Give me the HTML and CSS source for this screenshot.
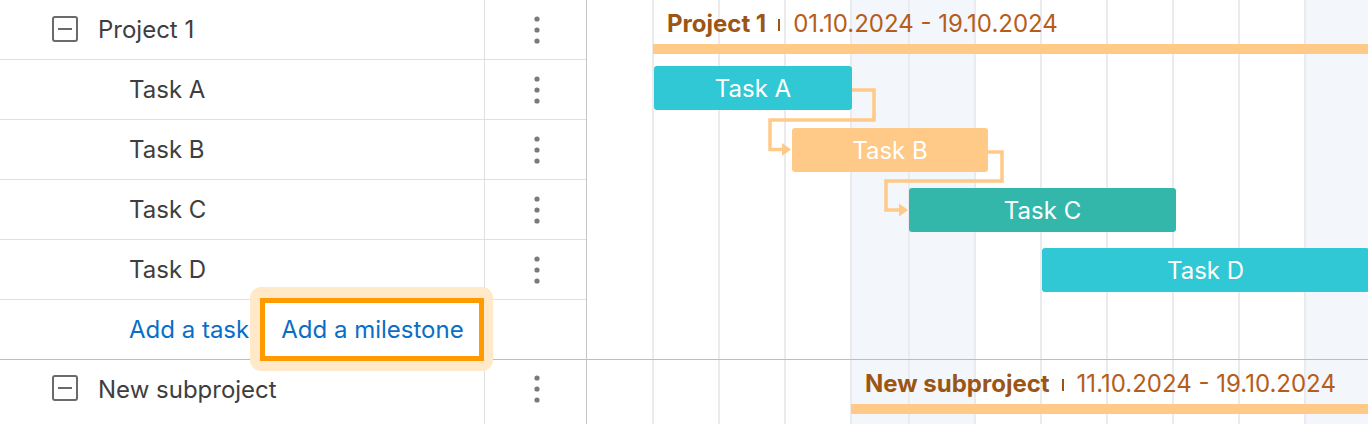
FILE: index.html
```html
<!DOCTYPE html>
<html>
<head>
<meta charset="utf-8">
<link rel="stylesheet" href="styles.css">
</head>
<body>
<div class="gantt">
  <div class="grid">
    <div class="row">
      <div class="name project"><span class="toggle"></span><span class="label">Project 1</span></div>
      <div class="menu"><svg class="kebab" width="6" height="28" viewBox="0 0 6 28"><circle cx="3" cy="3" r="2.6"/><circle cx="3" cy="14" r="2.6"/><circle cx="3" cy="25" r="2.6"/></svg></div>
    </div>
    <div class="row">
      <div class="name task"><span class="label">Task A</span></div>
      <div class="menu"><svg class="kebab" width="6" height="28" viewBox="0 0 6 28"><circle cx="3" cy="3" r="2.6"/><circle cx="3" cy="14" r="2.6"/><circle cx="3" cy="25" r="2.6"/></svg></div>
    </div>
    <div class="row">
      <div class="name task"><span class="label">Task B</span></div>
      <div class="menu"><svg class="kebab" width="6" height="28" viewBox="0 0 6 28"><circle cx="3" cy="3" r="2.6"/><circle cx="3" cy="14" r="2.6"/><circle cx="3" cy="25" r="2.6"/></svg></div>
    </div>
    <div class="row">
      <div class="name task"><span class="label">Task C</span></div>
      <div class="menu"><svg class="kebab" width="6" height="28" viewBox="0 0 6 28"><circle cx="3" cy="3" r="2.6"/><circle cx="3" cy="14" r="2.6"/><circle cx="3" cy="25" r="2.6"/></svg></div>
    </div>
    <div class="row">
      <div class="name task"><span class="label">Task D</span></div>
      <div class="menu"><svg class="kebab" width="6" height="28" viewBox="0 0 6 28"><circle cx="3" cy="3" r="2.6"/><circle cx="3" cy="14" r="2.6"/><circle cx="3" cy="25" r="2.6"/></svg></div>
    </div>
    <div class="row add-row">
      <div class="name task adds">
        <a class="link" href="#">Add a task</a>
        <a class="link milestone" href="#">Add a milestone</a>
      </div>
      <div class="menu"></div>
    </div>
    <div class="row last">
      <div class="name project"><span class="toggle"></span><span class="label">New subproject</span></div>
      <div class="menu"><svg class="kebab" width="6" height="28" viewBox="0 0 6 28"><circle cx="3" cy="3" r="2.6"/><circle cx="3" cy="14" r="2.6"/><circle cx="3" cy="25" r="2.6"/></svg></div>
    </div>
  </div>
  <div class="chart">
    <div class="cols">
      <div class="col first"></div>
      <div class="col"></div>
      <div class="col"></div>
      <div class="col"></div>
      <div class="col narrow shade"></div>
      <div class="col shade"></div>
      <div class="col"></div>
      <div class="col"></div>
      <div class="col"></div>
      <div class="col"></div>
      <div class="col"></div>
      <div class="col shade"></div>
    </div>
    <div class="section one">
      <div class="summary" style="left:80px"><b>Project 1</b><i class="sep"></i><span>01.10.2024 - 19.10.2024</span></div>
      <div class="sumbar" style="left:66px;width:800px"></div>
      <svg class="links" width="781" height="359" viewBox="0 0 781 359">
        <polyline points="265,90 287,90 287,120 183,120 183,149.5 196,149.5"/>
        <polygon points="195,143 195,156 204,149.5"/>
        <polyline points="401,152 415,152 415,181 299,181 299,210 313,210"/>
        <polygon points="312,203.5 312,216.5 321,210"/>
      </svg>
      <div class="bar cyan" style="left:67px;top:66px;width:198px">Task A</div>
      <div class="bar orange" style="left:205px;top:128px;width:196px">Task B</div>
      <div class="bar teal" style="left:322px;top:188px;width:267px">Task C</div>
      <div class="bar cyan" style="left:455px;top:248px;width:327px">Task D</div>
    </div>
    <div class="section two">
      <div class="summary" style="left:278px"><b>New subproject</b><i class="sep"></i><span>11.10.2024 - 19.10.2024</span></div>
      <div class="sumbar" style="left:264px;width:600px"></div>
    </div>
  </div>
</div>
</body>
</html>
```
FILE: styles.css
```css
html, body {
  margin: 0;
  padding: 0;
  background: #ffffff;
}
body {
  font-family: Inter, "Noto Sans", sans-serif;
  overflow: hidden;
  width: 1368px;
  height: 424px;
}
.gantt {
  display: flex;
  width: 1368px;
  height: 424px;
  overflow: hidden;
}
.grid {
  width: 587px;
  flex: none;
  box-sizing: border-box;
  border-right: 1px solid #c6c6c6;
  display: flex;
  flex-direction: column;
}
.row {
  display: flex;
  height: 60px;
  flex: none;
  box-sizing: border-box;
  border-bottom: 1px solid #e0e0e0;
}
.row.add-row {
  border-bottom-color: #bdbdbd;
}
.row.last {
  border-bottom: none;
  height: 64px;
}
.name {
  width: 485px;
  flex: none;
  box-sizing: border-box;
  border-right: 1px solid #e0e0e0;
  display: flex;
  align-items: center;
  font-size: 24px;
  color: #3e3e3e;
  white-space: nowrap;
}
.name.project {
  padding-left: 52px;
}
.name.task {
  padding-left: 129px;
}
.row.last .name.project {
  padding-bottom: 6px;
}
.toggle {
  width: 26px;
  height: 26px;
  box-sizing: border-box;
  border: 2px solid #6a6a6a;
  border-radius: 3px;
  margin-right: 20px;
  margin-top: -2px;
  display: flex;
  align-items: center;
  justify-content: center;
}
.toggle::after {
  content: "";
  width: 14px;
  height: 2px;
  background: #6a6a6a;
}
.menu {
  flex: 1;
  display: flex;
  align-items: center;
  justify-content: center;
  padding-left: 3px;
}
.row.last .menu {
  padding-bottom: 6px;
}
.kebab {
  fill: #7a7a7a;
}
.adds {
  gap: 11px;
}
.link {
  color: #0a6ec6;
  text-decoration: none;
  flex: none;
  white-space: nowrap;
}
.milestone {
  position: relative;
  z-index: 2;
  width: 224px;
  height: 63px;
  box-sizing: border-box;
  padding-left: 21px;
  display: flex;
  align-items: center;
}
.milestone::before {
  content: "";
  position: absolute;
  inset: -11px -9px -10px -10px;
  border-radius: 11px;
  background: #ffe9c9;
  z-index: -1;
}
.milestone::after {
  content: "";
  position: absolute;
  inset: 0;
  box-sizing: border-box;
  border: 5px solid #ff9b00;
  background: #ffffff;
  z-index: -1;
}
.chart {
  flex: 1;
  position: relative;
  overflow: hidden;
}
.cols {
  position: absolute;
  inset: 0;
  display: flex;
}
.col {
  width: 66px;
  flex: none;
  box-sizing: border-box;
  border-left: 2px solid #ebebed;
}
.col.first {
  width: 65px;
  border-left: none;
}
.col.narrow {
  width: 58px;
}
.col.shade {
  background: #f3f6fb;
}
.section {
  position: relative;
}
.section.one {
  height: 360px;
  box-sizing: border-box;
  border-bottom: 1px solid #bdbdbd;
}
.section.two {
  height: 64px;
}
.summary {
  position: absolute;
  top: 12px;
  display: flex;
  align-items: center;
  white-space: nowrap;
  font-size: 24px;
  line-height: 24px;
}
.summary b {
  font-weight: 700;
  color: #9b5514;
}
.summary span {
  color: #b65d1c;
}
.sep {
  display: inline-block;
  width: 2px;
  height: 12px;
  background: #9b5514;
  margin: 2px 13px 0 12px;
}
.sumbar {
  position: absolute;
  top: 44px;
  height: 10px;
  background: #ffc987;
}
.links {
  position: absolute;
  left: 0;
  top: 0;
}
.links polyline {
  fill: none;
  stroke: #ffc987;
  stroke-width: 3.5;
  stroke-linejoin: miter;
}
.links polygon {
  fill: #ffc987;
}
.bar {
  position: absolute;
  height: 44px;
  border-radius: 3px;
  color: #ffffff;
  font-size: 24px;
  font-weight: 400;
  display: flex;
  align-items: center;
  justify-content: center;
}
.bar.cyan {
  background: #2fc8d4;
}
.bar.orange {
  background: #ffc987;
}
.bar.teal {
  background: #33b7ab;
}
```
